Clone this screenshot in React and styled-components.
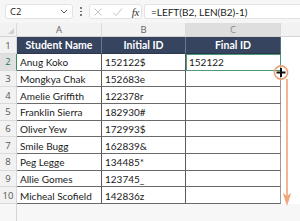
import React from "react";
import styled, { createGlobalStyle } from "styled-components";

const Global = createGlobalStyle`
  html, body { margin: 0; padding: 0; background: #ffffff; }
  body { font-family: Lato, "Open Sans", sans-serif; overflow: hidden; }
  #root { width: 300px; height: 221px; }
`;

const Page = styled.div`
  width: 300px;
  height: 221px;
  display: flex;
  flex-direction: column;
  position: relative;
  overflow: hidden;
  background: #f6f6f6;
`;

const Toolbar = styled.div`
  height: 23px;
  display: flex;
  align-items: flex-start;
  padding: 4px 0 0 5px;
  box-sizing: border-box;
  background: #f6f6f6;
  gap: 0;
`;

const Box = styled.div`
  height: 15px;
  box-sizing: border-box;
  background: #ffffff;
  border: 1px solid #e3e3e3;
  border-radius: 3px;
  display: flex;
  align-items: center;
  width: ${(p) => (p.$w ? p.$w + "px" : "auto")};
  flex: ${(p) => (p.$grow ? 1 : "none")};
  margin-left: ${(p) => p.$ml || 0}px;
  padding: 0 ${(p) => p.$pad || 0}px;
  font-family: "Segoe UI", "Open Sans", sans-serif;
  font-size: 10px;
  color: #222;
  border-right: ${(p) => (p.$grow ? "none" : "1px solid #e3e3e3")};
  border-radius: ${(p) => (p.$grow ? "3px 0 0 3px" : "3px")};
`;

const NameText = styled.span`
  flex: 1;
  font-size: 9.5px;
  color: #222;
`;

const Dots = styled.div`
  width: 16px;
  height: 15px;
  display: flex;
  flex-direction: column;
  align-items: center;
  justify-content: center;
  gap: 1.5px;
  & > i {
    width: 1.8px;
    height: 1.8px;
    border-radius: 50%;
    background: #555;
    display: block;
  }
`;

const FuncIcons = styled.div`
  display: flex;
  align-items: center;
  justify-content: space-between;
  width: 100%;
  padding: 0 2px 0 3px;
  box-sizing: border-box;
`;

const Fx = styled.span`
  font-family: "Liberation Serif", "DejaVu Serif", serif;
  font-style: italic;
  font-size: 11px;
  color: #333;
  letter-spacing: -0.3px;
`;

const FormulaText = styled.span`
  font-family: Lato, "Open Sans", sans-serif;
  font-size: 10px;
  color: #222;
  white-space: nowrap;
`;

const Sheet = styled.div`
  display: grid;
  grid-template-columns: 17px 85px 84px 95px 1fr;
  grid-template-rows: 14px 17px repeat(9, 16.66px) 1fr;
  flex: 1;
  background: #ffffff;
`;

const Corner = styled.div`
  background: #f2f2f2;
  border-right: 1px solid #dcdcdc;
  border-bottom: 1px solid #d4d4d4;
  position: relative;
  &::after {
    content: "";
    position: absolute;
    right: 2px;
    bottom: 2px;
    width: 0;
    height: 0;
    border-left: 6px solid transparent;
    border-bottom: 6px solid #d0d0d0;
  }
`;

const ColHead = styled.div`
  background: ${(p) => (p.$sel ? "#dedede" : "#f2f2f2")};
  border-right: 1px solid #dadada;
  border-bottom: 1px solid #d4d4d4;
  display: flex;
  align-items: center;
  justify-content: center;
  font-family: "Segoe UI", "Open Sans", sans-serif;
  font-size: 9.5px;
  color: ${(p) => (p.$sel ? "#8a8a8a" : "#666")};
  box-sizing: border-box;
`;

const Filler = styled.div`
  background: ${(p) => p.$bg || "#ffffff"};
  border-bottom: ${(p) => (p.$top ? "1px solid #d4d4d4" : "none")};
`;

const RowHead = styled.div`
  background: ${(p) => (p.$sel ? "#e0e0e0" : "#f2f2f2")};
  border-right: 1px solid ${(p) => (p.$sel ? "#3f8f66" : "#d6d6d6")};
  border-bottom: 1px solid #dadada;
  display: flex;
  align-items: center;
  justify-content: center;
  font-family: "Segoe UI", "Open Sans", sans-serif;
  font-size: 9.5px;
  color: ${(p) => (p.$sel ? "#1f7a4a" : "#555")};
  box-sizing: border-box;
`;

const HeadCell = styled.div`
  background: #364460;
  color: #ffffff;
  font-weight: 700;
  font-size: 10.5px;
  display: flex;
  align-items: center;
  justify-content: center;
  border-right: 1px solid ${(p) => (p.$last ? "#5b6a83" : "#6a7690")};
  border-bottom: 1px solid #2c3850;
  box-sizing: border-box;
  white-space: nowrap;
`;

const Cell = styled.div`
  background: #ffffff;
  color: #1a1a1a;
  font-size: 10px;
  display: flex;
  align-items: center;
  padding-left: 3px;
  padding-top: 1px;
  box-sizing: border-box;
  white-space: nowrap;
  border-right: 1px solid ${(p) => (p.$last ? "#9a9a9a" : "#5a5a5a")};
  border-bottom: 1px solid #6a6a6a;
  position: relative;
  ${(p) =>
    p.$sel &&
    `
    border-right: 1px solid #4e9a76;
    border-bottom: 1px solid #4e9a76;
    box-shadow: inset 1px 1px 0 #4e9a76;
  `}
`;

const Blank = styled.div`
  background: #f7f7f7;
  border-right: ${(p) => (p.$head ? "1px solid #d6d6d6" : "none")};
`;

const Overlay = styled.svg`
  position: absolute;
  left: 0;
  top: 0;
  pointer-events: none;
`;

const names = [
  ["Anug Koko", "152122$", "152122"],
  ["Mongkya Chak", "152683e", ""],
  ["Amelie Griffith", "122378r", ""],
  ["Franklin Sierra", "182930#", ""],
  ["Oliver Yew", "172993$", ""],
  ["Smile Bugg", "162839&", ""],
  ["Peg Legge", "134485*", ""],
  ["Allie Gomes", "123745_", ""],
  ["Micheal Scofield", "142836z", ""],
];

export default function App() {
  return (
    <>
      <Global />
      <Page>
        <Toolbar>
          <Box $w={68} $pad={4}>
            <NameText>C2</NameText>
            <svg width="8" height="5" viewBox="0 0 8 5">
              <path d="M1 1 L4 4 L7 1" fill="none" stroke="#555" strokeWidth="1" />
            </svg>
          </Box>
          <Dots>
            <i />
            <i />
            <i />
          </Dots>
          <Box $w={53}>
            <FuncIcons>
              <svg width="10" height="10" viewBox="0 0 10 10">
                <path d="M1.5 1.5 L8.5 8.5 M8.5 1.5 L1.5 8.5" stroke="#c4c4c4" strokeWidth="1" />
              </svg>
              <svg width="11" height="10" viewBox="0 0 11 10">
                <path d="M1 5.5 L4 8.5 L10 1.5" fill="none" stroke="#c4c4c4" strokeWidth="1" />
              </svg>
              <Fx>fx</Fx>
            </FuncIcons>
          </Box>
          <Box $grow $ml={2} $pad={6}>
            <FormulaText>=LEFT(B2, LEN(B2)-1)</FormulaText>
          </Box>
        </Toolbar>
        <Sheet>
          <Corner />
          <ColHead>A</ColHead>
          <ColHead>B</ColHead>
          <ColHead $sel>C</ColHead>
          <Filler $bg="#f2f2f2" $top />

          <RowHead>1</RowHead>
          <HeadCell>Student Name</HeadCell>
          <HeadCell>Initial ID</HeadCell>
          <HeadCell $last>Final ID</HeadCell>
          <Filler />

          {names.map((r, i) => (
            <React.Fragment key={i}>
              <RowHead $sel={i === 0}>{i + 2}</RowHead>
              <Cell>{r[0]}</Cell>
              <Cell>{r[1]}</Cell>
              <Cell $last $sel={i === 0}>
                {r[2]}
              </Cell>
              <Filler />
            </React.Fragment>
          ))}
          <Blank $head />
          <Blank />
          <Blank />
          <Blank />
          <Blank />
        </Sheet>
        <Overlay width="300" height="221" viewBox="0 0 300 221">
          <line x1="287" y1="79" x2="287" y2="196" stroke="#eea67a" strokeWidth="1.6" />
          <path d="M282.8 193 L287 206 L291.2 193 L287 196 Z" fill="#eea67a" />
          <circle cx="281" cy="72.5" r="6.6" fill="none" stroke="#e9a27a" strokeWidth="1.6" />
          <path d="M281 68 V77 M276.5 72.5 H285.5" stroke="#111" strokeWidth="2" />
        </Overlay>
      </Page>
    </>
  );
}
